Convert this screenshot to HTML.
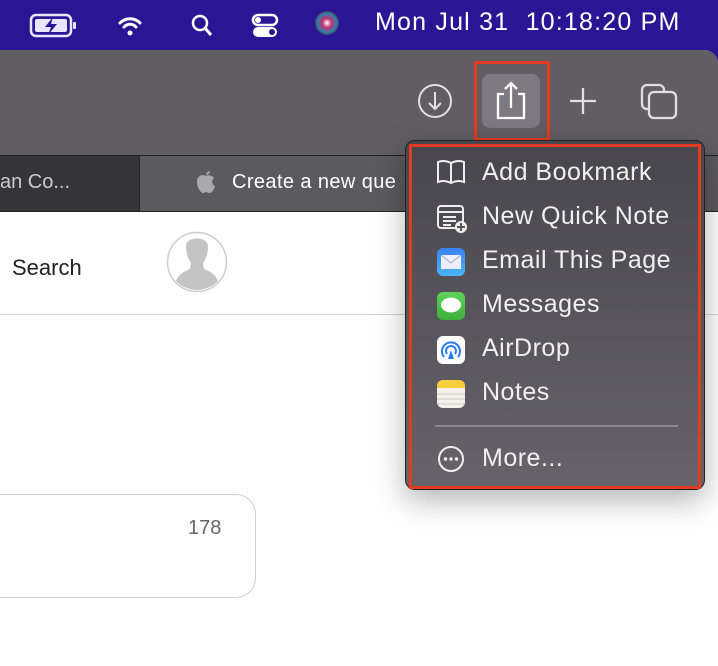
<!DOCTYPE html>
<html><head><style>
*{margin:0;padding:0;box-sizing:border-box}
body{width:718px;height:666px;overflow:hidden;background:#2a1694;font-family:"Liberation Sans",sans-serif;position:relative}
.abs{position:absolute}
svg{overflow:visible}
.mb{color:#fff;font-size:25px;top:8px;letter-spacing:1.2px}
.win{left:0;top:50px;width:718px;height:616px;background:#fff;border-top-right-radius:14px;overflow:hidden}
.item{position:absolute;left:482px;color:#f0f0f0;font-size:25px;letter-spacing:0.5px}
</style></head><body>
<div class="abs mb" style="left:375px">Mon Jul 31&nbsp; 10:18:20 PM</div>
<svg class="abs" style="left:28px;top:12px" width="300" height="28" viewBox="0 0 300 28">
 <rect x="3" y="3" width="40" height="21" rx="5" fill="none" stroke="#e8e6ff" stroke-width="2.5"/>
 <rect x="7" y="7" width="32" height="13" rx="2" fill="#e8e6ff"/>
 <path d="M25 5 L17 15 H23 L20 23 L29 12 H23 Z" fill="#2a1694"/>
 <rect x="45" y="10" width="3" height="7" rx="1" fill="#e8e6ff"/>
 <path d="M92 11 a14 14 0 0 1 20 0 M96 15 a8 8 0 0 1 12 0" stroke="#fff" stroke-width="3" fill="none" stroke-linecap="round"/>
 <circle cx="102" cy="21" r="2.5" fill="#fff"/>
 <circle cx="172" cy="11" r="7" stroke="#fff" stroke-width="2.5" fill="none"/><path d="M177 16 L183 23" stroke="#fff" stroke-width="3"/>
 <rect x="225" y="3" width="24" height="10" rx="5" fill="none" stroke="#fff" stroke-width="2.5"/><circle cx="230" cy="8" r="3" fill="#fff"/>
 <rect x="225" y="15" width="24" height="10" rx="5" fill="#fff"/><circle cx="244" cy="20" r="3" fill="#2a1694"/>
</svg>
<svg class="abs" style="left:314px;top:10px" width="26" height="26"><defs><radialGradient id="s"><stop offset="0" stop-color="#fff"/><stop offset=".4" stop-color="#c03070"/><stop offset=".8" stop-color="#3080b0"/><stop offset="1" stop-color="#404060"/></radialGradient></defs><circle cx="13" cy="13" r="12" fill="url(#s)"/></svg>
<div class="abs win">
 <div class="abs" style="left:0;top:0;width:718px;height:105px;background:#605e63"></div>
 <div class="abs" style="left:0;top:105px;width:140px;height:56px;background:#353437;border-top:1px solid #222;border-right:1px solid #222"></div>
 <div class="abs" style="left:140px;top:105px;width:578px;height:56px;background:#5b5a5e;border-top:1px solid #222"></div>
 <div class="abs" style="left:0;top:161px;width:718px;height:1px;background:#222"></div>
 <div class="abs" style="left:0;top:121px;color:#ccc;font-size:20px">an Co...</div>
 <svg class="abs" style="left:195px;top:120px" width="22" height="24"><path d="M11 6 C8 4 2 5 2 12 C2 18 6 23 8 23 C10 23 10 22 11 22 C12 22 13 23 15 23 C17 23 20 18 20 16 C17 15 16 10 19 8 C17 5 13 5 11 6 Z M11 5 C11 3 13 1 15 1 C15 3 13 5 11 5Z" fill="#aaa"/></svg>
 <div class="abs" style="left:232px;top:121px;color:#fff;font-size:20px;letter-spacing:0.4px">Create a new que</div>
 <div class="abs" style="left:12px;top:205px;color:#222;font-size:22px">Search</div>
 <svg class="abs" style="left:166px;top:181px" width="62" height="62"><circle cx="31" cy="31" r="29.5" fill="#fff" stroke="#ccc" stroke-width="1.5"/><path d="M20 15 C20 5 42 5 42 15 C42 22 40 28 37 32 L38 38 C45 41 50 44 52 50 A29 29 0 0 1 10 50 C12 44 17 41 24 38 L25 32 C22 28 20 22 20 15Z" fill="#c4c4c4"/></svg>
 <div class="abs" style="left:0;top:264px;width:718px;height:1px;background:#d5d5d5"></div>
 <div class="abs" style="left:-20px;top:444px;width:276px;height:104px;border:1.5px solid #d0d0d4;border-radius:20px"></div>
 <div class="abs" style="left:188px;top:467px;color:#666;font-size:20px">178</div>
 <svg class="abs" style="left:416px;top:30px" width="300" height="50">
  <circle cx="19" cy="21" r="16" fill="none" stroke="#e0e0e0" stroke-width="2"/><path d="M19 12 V29 M13 23 L19 29 L25 23" stroke="#e0e0e0" stroke-width="2" fill="none"/>
  <rect x="66" y="-6" width="58" height="54" rx="8" fill="#7c7a80"/>
  <path d="M88 14 H82 V38 H108 V14 H102 M95 28 V3 M89 9 L95 3 L101 9" stroke="#fff" stroke-width="2.3" fill="none"/>
  <path d="M167 8 V34 M154 21 H180" stroke="#e0e0e0" stroke-width="2.3"/>
  <rect x="226" y="5" width="22" height="24" rx="5" fill="none" stroke="#e0e0e0" stroke-width="2.3"/>
  <rect x="233" y="12" width="27" height="26" rx="5" fill="#605e63" stroke="#e0e0e0" stroke-width="2.3"/>
 </svg>
 <div class="abs" style="left:474px;top:11px;width:76px;height:80px;border:3px solid #e53a22"></div>
 <div class="abs" style="left:405px;top:90px;width:300px;height:350px;border-radius:10px;background:linear-gradient(#48464d,#66646a);border:1px solid #222;box-shadow:0 10px 30px rgba(0,0,0,.3)"></div>
 <div class="abs" style="left:409px;top:94px;width:292px;height:345px;border:3.5px solid #e53a22"></div>
 <div class="abs" style="left:435px;top:375px;width:243px;height:1.5px;background:#8a888e"></div>
</div>
<svg class="abs" style="left:434px;top:156px" width="36" height="330">
 <path d="M4 6 C9 4 13 5 17 7 C21 5 25 4 30 6 V26 C25 24 21 25 17 27 C13 25 9 24 4 26 Z M17 7 V27" fill="none" stroke="#eee" stroke-width="2"/>
 <rect x="4" y="50" width="25" height="22" rx="3" fill="none" stroke="#eee" stroke-width="2"/><path d="M4 56 H29 M9 61 H22 M9 65 H22 M9 69 H17" stroke="#eee" stroke-width="2"/><circle cx="27" cy="71" r="6" fill="#eee"/><path d="M27 67 V75 M23 71 H31" stroke="#555" stroke-width="2"/>
 <defs><linearGradient id="m" x2="0" y2="1"><stop offset="0" stop-color="#3a82f0"/><stop offset="1" stop-color="#4cb5f8"/></linearGradient><linearGradient id="g" x2="0" y2="1"><stop offset="0" stop-color="#5fd35a"/><stop offset="1" stop-color="#3cae3a"/></linearGradient></defs>
 <rect x="3" y="92" width="28" height="28" rx="6" fill="url(#m)"/><rect x="7" y="99" width="20" height="14" fill="#eef" /><path d="M7 99 L17 107 L27 99" stroke="#9ab" fill="none"/>
 <rect x="3" y="136" width="28" height="28" rx="6" fill="url(#g)"/><ellipse cx="17" cy="149" rx="10" ry="7.5" fill="#fff"/>
 <rect x="3" y="180" width="28" height="28" rx="6" fill="#fff"/><path d="M10 201 A9 9 0 1 1 24 201 M13 198 A5 5 0 1 1 21 198" stroke="#2a7af0" stroke-width="2" fill="none"/><path d="M17 194 L14 203 H20 Z" fill="#2a7af0"/>
 <rect x="3" y="224" width="28" height="28" rx="6" fill="#f3f1ea"/><path d="M3 232 V230 A6 6 0 0 1 9 224 H25 A6 6 0 0 1 31 230 V232 Z" fill="#f8cf3a"/><path d="M3 238 H31 M3 243 H31 M3 248 H31" stroke="#ccc"/>
 <circle cx="17" cy="303" r="12" fill="none" stroke="#eee" stroke-width="2"/><circle cx="11.5" cy="303" r="1.7" fill="#eee"/><circle cx="17" cy="303" r="1.7" fill="#eee"/><circle cx="22.5" cy="303" r="1.7" fill="#eee"/>
</svg>
<div class="item" style="top:158px">Add Bookmark</div>
<div class="item" style="top:202px">New Quick Note</div>
<div class="item" style="top:246px">Email This Page</div>
<div class="item" style="top:290px">Messages</div>
<div class="item" style="top:334px">AirDrop</div>
<div class="item" style="top:378px">Notes</div>
<div class="item" style="top:444px">More...</div>
</body></html>
